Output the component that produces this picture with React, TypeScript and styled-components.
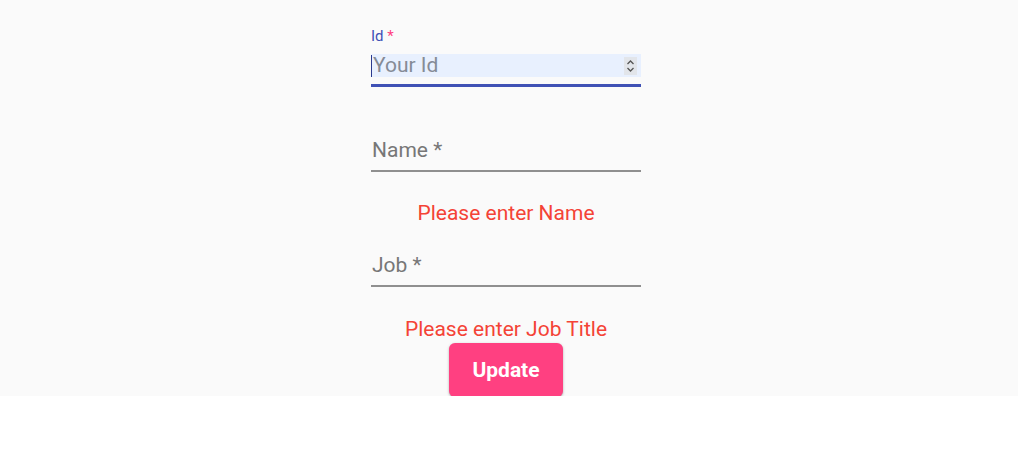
import React from "react";
import styled, { createGlobalStyle } from "styled-components";

const GlobalStyle = createGlobalStyle`
  html, body {
    margin: 0;
    padding: 0;
    background: #ffffff;
    font-family: Roboto, "Noto Sans", Arial, sans-serif;
  }
`;

const Page = styled.section`
  background: #fafafa;
  height: 396px;
  padding-top: 28px;
  box-sizing: border-box;
`;

const Form = styled.form`
  width: 270px;
  margin-left: 371px;
  display: flex;
  flex-direction: column;
`;

const Field = styled.div<{ $top?: number }>`
  display: flex;
  flex-direction: column;
  margin-top: ${(p) => p.$top ?? 0}px;
`;

const Label = styled.label`
  font-size: 15px;
  line-height: 16px;
  color: #3f51b5;
  margin-bottom: 10px;
`;

const Required = styled.span`
  color: #ff4081;
`;

const InputRow = styled.div<{ $filled?: boolean }>`
  display: flex;
  align-items: center;
  height: 23px;
  background: ${(p) => (p.$filled ? "#e8f0fe" : "transparent")};
`;

const Caret = styled.span`
  width: 1px;
  height: 22px;
  background: #2b3a8f;
  flex: none;
`;

const Input = styled.input<{ $muted?: boolean }>`
  flex: 1;
  min-width: 0;
  border: 0;
  outline: none;
  padding: 0 0 0 1px;
  margin: 0;
  background: transparent;
  font-family: Roboto, "Noto Sans", Arial, sans-serif;
  font-size: 21px;
  line-height: 23px;
  height: 23px;
  color: rgba(0, 0, 0, 0.87);

  &::placeholder {
    color: ${(p) => (p.$muted ? "#858b96" : "#777777")};
    opacity: 1;
  }
`;

const Spinner = styled.span`
  width: 13px;
  height: 18px;
  margin-right: 4px;
  background: #e2e5ea;
  display: flex;
  align-items: center;
  justify-content: center;
  flex: none;
`;

const Underline = styled.div<{ $active?: boolean }>`
  height: ${(p) => (p.$active ? 3 : 2)}px;
  margin-top: ${(p) => (p.$active ? 7 : 8)}px;
  background: ${(p) => (p.$active ? "#3f51b5" : "#8f8f8f")};
`;

const ErrorText = styled.div<{ $top: number }>`
  margin-top: ${(p) => p.$top}px;
  font-size: 21px;
  line-height: 24px;
  color: #f44336;
  text-align: center;
  white-space: nowrap;
`;

const Button = styled.button`
  align-self: center;
  margin-top: 2px;
  height: 54px;
  padding: 0 23px;
  border: 0;
  border-radius: 6px;
  background: #ff4081;
  color: #ffffff;
  font-family: Roboto, "Noto Sans", Arial, sans-serif;
  font-size: 21px;
  font-weight: 700;
  box-shadow: 0 1px 3px rgba(0, 0, 0, 0.25), 0 1px 1px rgba(0, 0, 0, 0.12);
  cursor: pointer;
`;

const SpinIcon = () => (
  <svg width="9" height="14" viewBox="0 0 9 14" fill="none">
    <path d="M1.5 5 L4.5 2 L7.5 5" stroke="#555" strokeWidth="1.3" />
    <path d="M1.5 9 L4.5 12 L7.5 9" stroke="#555" strokeWidth="1.3" />
  </svg>
);

export default function App() {
  return (
    <>
      <GlobalStyle />
      <Page>
        <Form onSubmit={(e) => e.preventDefault()}>
          <Field>
            <Label>
              Id <Required>*</Required>
            </Label>
            <InputRow $filled>
              <Caret />
              <Input $muted placeholder="Your Id" />
              <Spinner>
                <SpinIcon />
              </Spinner>
            </InputRow>
            <Underline $active />
          </Field>

          <Field $top={52}>
            <InputRow>
              <Input placeholder="Name *" />
            </InputRow>
            <Underline />
          </Field>
          <ErrorText $top={29}>Please enter Name</ErrorText>

          <Field $top={29}>
            <InputRow>
              <Input placeholder="Job *" />
            </InputRow>
            <Underline />
          </Field>
          <ErrorText $top={30}>Please enter Job Title</ErrorText>

          <Button type="submit">Update</Button>
        </Form>
      </Page>
    </>
  );
}
